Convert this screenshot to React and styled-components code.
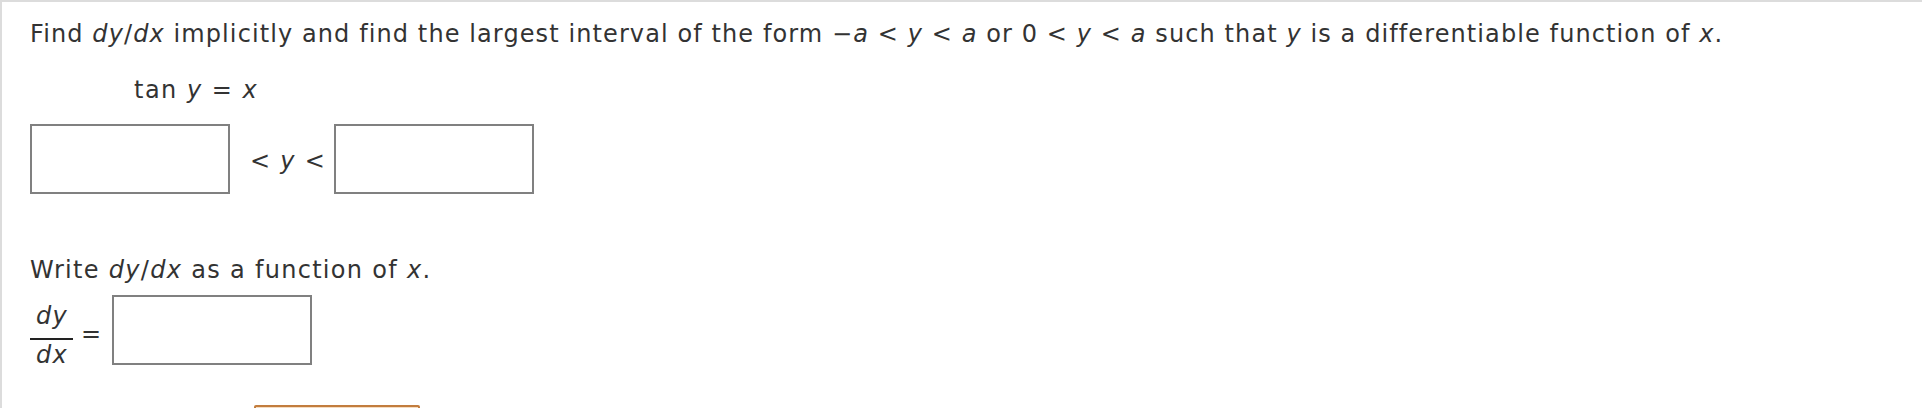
import React from "react";
import styled, { createGlobalStyle } from "styled-components";

const GlobalStyle = createGlobalStyle`
  html, body {
    margin: 0;
    padding: 0;
    background: #fff;
    overflow: hidden;
  }
  body {
    font-family: Verdana, "DejaVu Sans", sans-serif;
    color: #333;
  }
`;

const Panel = styled.div`
  display: flex;
  flex-direction: column;
  align-items: flex-start;
  border-top: 2px solid #dcdcdc;
  border-left: 2px solid #dcdcdc;
  padding: 14px 0 0 28px;
  min-height: 420px;
  box-sizing: border-box;
  letter-spacing: 1.3px;
`;

const Line = styled.div`
  font-size: 24px;
  line-height: 36px;
  white-space: nowrap;
  letter-spacing: ${(p) => p.$spacing || 1.3}px;
  margin-top: ${(p) => p.$top || 0}px;
  margin-left: ${(p) => p.$indent || 0}px;
`;

const V = styled.i`
  font-style: italic;
`;

const Row = styled.div`
  display: flex;
  align-items: ${(p) => p.$align || "center"};
  margin-top: ${(p) => p.$top || 0}px;
`;

const AnswerBox = styled.input`
  width: 200px;
  height: 70px;
  box-sizing: border-box;
  border: 2px solid #808080;
  border-radius: 0;
  background: #fff;
  padding: 0 8px;
  font-size: 22px;
  font-family: inherit;
  outline: none;
`;

const Between = styled.span`
  font-size: 24px;
  line-height: 36px;
  padding: 4px 8px 0 20px;
  white-space: pre;
`;

const Fraction = styled.span`
  display: inline-flex;
  flex-direction: column;
  align-items: stretch;
  margin-top: 6px;
  font-size: 24px;
  font-style: italic;
  text-align: center;
`;

const Numerator = styled.span`
  line-height: 30px;
  padding: 0 5px 7px 6px;
`;

const Denominator = styled.span`
  line-height: 30px;
  border-top: 2px solid #222;
  padding: 0 5px 0 6px;
`;

const Equals = styled.span`
  font-size: 24px;
  line-height: 30px;
  margin: 24px 10px 0 8px;
`;

const SubmitButton = styled.button`
  margin: 35px 0 0 224px;
  width: 166px;
  height: 40px;
  border: 2px solid #c27d3e;
  box-shadow: inset 0 0 0 2px #f6dcc0;
  background: linear-gradient(#fff6ec, #fbe6cf);
  border-radius: 2px;
  padding: 0;
`;

export default function App() {
  return (
    <>
      <GlobalStyle />
      <Panel>
        <Line $spacing={1.1}>
          Find <V>dy</V>/<V>dx</V> implicitly and find the largest interval of
          the form −<V>a</V> &lt; <V>y</V> &lt; <V>a</V> or 0 &lt; <V>y</V>{" "}
          &lt; <V>a</V> such that <V>y</V> is a differentiable function of{" "}
          <V>x</V>.
        </Line>
        <Line $top={20} $indent={104} $spacing={1.5}>
          tan <V>y</V> = <V>x</V>
        </Line>
        <Row $top={16}>
          <AnswerBox type="text" aria-label="lower bound" />
          <Between>
            &lt; <V>y</V> &lt;
          </Between>
          <AnswerBox type="text" aria-label="upper bound" />
        </Row>
        <Line $top={58}>
          Write <V>dy</V>/<V>dx</V> as a function of <V>x</V>.
        </Line>
        <Row $top={7} $align="flex-start">
          <Fraction>
            <Numerator>dy</Numerator>
            <Denominator>dx</Denominator>
          </Fraction>
          <Equals>=</Equals>
          <AnswerBox type="text" aria-label="dy/dx" />
        </Row>
        <SubmitButton type="button" aria-label="Submit" />
      </Panel>
    </>
  );
}
